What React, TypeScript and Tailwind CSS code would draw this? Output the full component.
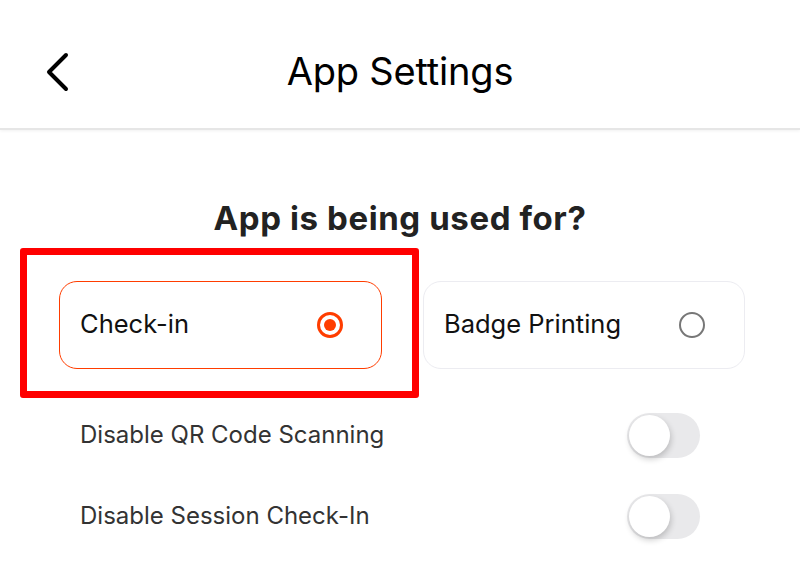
import { useState } from "react";

const font = { fontFamily: "Inter, 'Noto Sans', sans-serif" };

const Toggle = ({ on, onClick }: { on: boolean; onClick: () => void }) => (
  <button
    onClick={onClick}
    className={`relative w-[73px] h-[45px] rounded-full ${on ? "bg-[#ff3d00]" : "bg-[#e9e9eb]"}`}>
    <span
      className={`absolute top-[2px] ${on ? "left-[30px]" : "left-[2px]"} w-[41px] h-[41px] rounded-full bg-white shadow-[1px_3px_6px_rgba(0,0,0,0.2)]`}
    />
  </button>
);

const App = () => {
  const [mode, setMode] = useState<"checkin" | "badge">("checkin");
  const [disableQr, setDisableQr] = useState(false);
  const [disableSession, setDisableSession] = useState(false);

  return (
    <div className="w-[800px] h-[572px] bg-white overflow-hidden" style={font}>
      {/* header */}
      <div className="relative h-[130px] flex items-center justify-center border-b-[2px] border-[#e6e6e6] shadow-[0_1px_3px_rgba(0,0,0,0.06)]">
        <button className="absolute left-[42px] top-[52px] w-[30px] h-[40px] flex items-center justify-center">
          <svg width="28" height="40" viewBox="0 0 28 40" fill="none">
            <path d="M23 3 L6 20 L23 37" stroke="#000" strokeWidth="4" strokeLinecap="round" strokeLinejoin="round" />
          </svg>
        </button>
        <h1 className="text-[38px] text-black tracking-[-0.2px] mt-[14px]">App Settings</h1>
      </div>

      <h2 className="mt-[64px] text-center text-[33px] font-bold text-[#222] tracking-[0.6px]">
        App is being used for?
      </h2>

      <div className="mt-[37px] ml-[59px] flex gap-[41px]">
        <div className="relative">
          {/* highlight box */}
          <div className="absolute -top-[33px] -left-[39px] -right-[37px] -bottom-[29px] border-[7px] border-[#ff0000] rounded-[3px] pointer-events-none" />
          <button
            onClick={() => setMode("checkin")}
            className={`w-[323px] h-[88px] rounded-[18px] border flex items-center justify-between pl-[20px] pr-[38px] ${
              mode === "checkin" ? "border-[#ff3d00]" : "border-[#ececf1]"
            }`}>
            <span className="text-[25.5px] text-[#111]">Check-in</span>
            <span
              className={`w-[26px] h-[26px] rounded-full flex items-center justify-center border-[3px] ${
                mode === "checkin" ? "border-[#ff3d00]" : "border-[#777]"
              }`}>
              {mode === "checkin" && <span className="w-[12px] h-[12px] rounded-full bg-[#ff3d00]" />}
            </span>
          </button>
        </div>
        <button
          onClick={() => setMode("badge")}
          className={`w-[322px] h-[88px] rounded-[18px] border flex items-center justify-between pl-[20px] pr-[39px] ${
            mode === "badge" ? "border-[#ff3d00]" : "border-[#ececf1]"
          }`}>
          <span className="text-[25.5px] text-[#111]">Badge Printing</span>
          <span
            className={`w-[26px] h-[26px] rounded-full flex items-center justify-center border-[2.5px] ${
              mode === "badge" ? "border-[#ff3d00]" : "border-[#777]"
            }`}>
            {mode === "badge" && <span className="w-[12px] h-[12px] rounded-full bg-[#ff3d00]" />}
          </span>
        </button>
      </div>

      <div className="mt-[44px] ml-[80px] mr-[100px] flex flex-col gap-[36px]">
        <div className="flex items-center justify-between">
          <span className="text-[24px] text-[#333]">Disable QR Code Scanning</span>
          <Toggle on={disableQr} onClick={() => setDisableQr(!disableQr)} />
        </div>
        <div className="flex items-center justify-between">
          <span className="text-[24px] text-[#333]">Disable Session Check-In</span>
          <Toggle on={disableSession} onClick={() => setDisableSession(!disableSession)} />
        </div>
      </div>
    </div>
  );
};

export default App;
